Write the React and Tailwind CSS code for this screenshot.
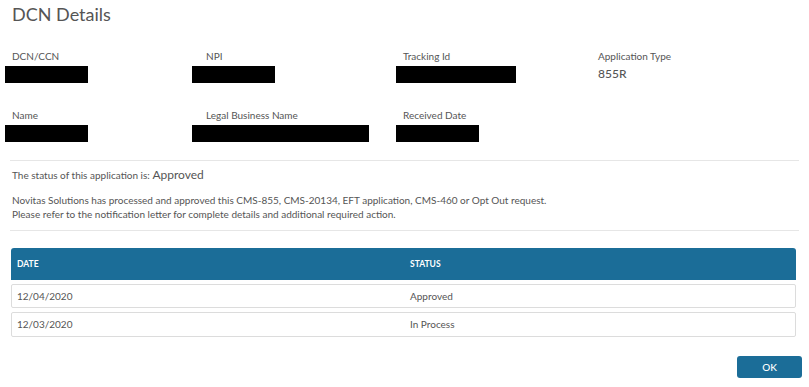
export default function App() {
  const bar = "h-[17px] bg-black";
  return (
    <div className="w-[809px] h-[387px] bg-white text-[#555] overflow-hidden" style={{ fontFamily: "Lato, 'Open Sans', sans-serif" }}>
      <div className="pt-[2px] pl-[12px] text-[18px] leading-6 text-[#555]">DCN Details</div>

      <div className="mt-[23px] grid grid-cols-[187px_204px_202px_1fr] pl-[5px] text-[10px] leading-[14px]">
        <div className="flex flex-col">
          <div className="pl-[7px]">DCN/CCN</div>
          <div className={`mt-[3px] w-[83px] ${bar}`} />
        </div>
        <div className="flex flex-col">
          <div className="pl-[14px]">NPI</div>
          <div className={`mt-[3px] w-[83px] ${bar}`} />
        </div>
        <div className="flex flex-col">
          <div className="pl-[7px]">Tracking Id</div>
          <div className={`mt-[3px] w-[120px] ${bar}`} />
        </div>
        <div className="flex flex-col">
          <div>Application Type</div>
          <div className="mt-[3px] text-[12px] leading-4 font-medium">855R</div>
        </div>

        <div className="flex flex-col mt-[25px]">
          <div className="pl-[7px]">Name</div>
          <div className={`mt-[3px] w-[83px] ${bar}`} />
        </div>
        <div className="flex flex-col mt-[25px]">
          <div className="pl-[14px]">Legal Business Name</div>
          <div className={`mt-[3px] w-[177px] ${bar}`} />
        </div>
        <div className="flex flex-col mt-[25px]">
          <div className="pl-[7px]">Received Date</div>
          <div className={`mt-[3px] w-[83px] ${bar}`} />
        </div>
        <div />
      </div>

      <div className="mx-[10px] mt-[18px] border-t border-[#e6e6e6]" />

      <div className="pl-[12px] mt-[6px] text-[10px] leading-4">
        The status of this application is: <span className="text-[12px]">Approved</span>
      </div>
      <div className="pl-[12px] mt-[10px] text-[10px] leading-[14px]">
        <div>Novitas Solutions has processed and approved this CMS-855, CMS-20134, EFT application, CMS-460 or Opt Out request.</div>
        <div>Please refer to the notification letter for complete details and additional required action.</div>
      </div>

      <div className="mx-[10px] mt-[9px] border-t border-[#e6e6e6]" />

      <div className="ml-[11px] mr-[13px] mt-[17px] flex flex-col gap-[4px]">
        <div className="h-[32px] bg-[#1b6d98] rounded-t-[3px] flex items-center text-white text-[8.5px] font-bold">
          <div className="w-[399px] pl-[6px]">DATE</div>
          <div>STATUS</div>
        </div>
        <div className="h-[24px] border border-[#dcdcdc] rounded-[2px] flex items-center text-[10px]">
          <div className="w-[398px] pl-[5px]">12/04/2020</div>
          <div>Approved</div>
        </div>
        <div className="h-[25px] border border-[#dcdcdc] rounded-[2px] flex items-center text-[10px]">
          <div className="w-[398px] pl-[5px]">12/03/2020</div>
          <div>In Process</div>
        </div>
      </div>

      <div className="flex justify-end pr-[7px] mt-[19px]">
        <button className="w-[65px] h-[22px] bg-[#1b6d98] rounded-[3px] text-white text-[10px] font-medium">OK</button>
      </div>
    </div>
  );
}
